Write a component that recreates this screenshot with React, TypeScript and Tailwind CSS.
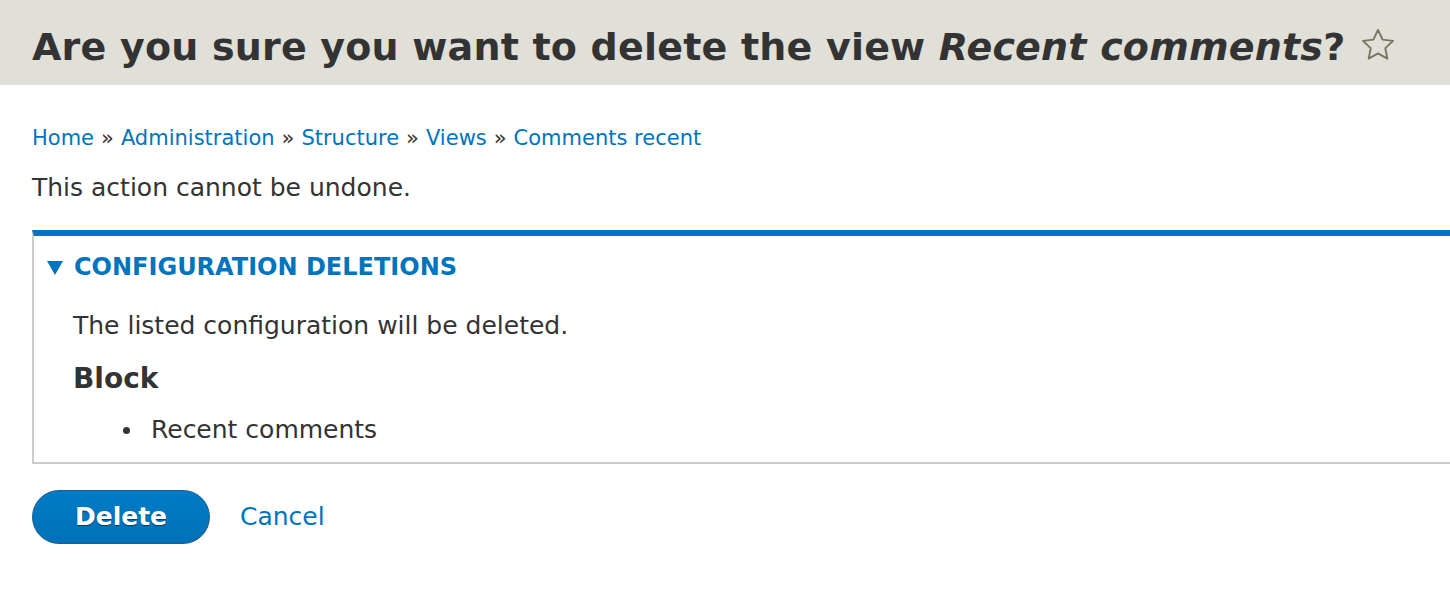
import React from 'react';

const font = { fontFamily: '"DejaVu Sans", "Lucida Grande", Verdana, sans-serif' };

const crumbs = ['Home', 'Administration', 'Structure', 'Views', 'Comments recent'];

export default function App() {
  return (
    <div className="w-[1450px] h-[614px] overflow-hidden bg-white text-[#333]" style={font}>
      <div className="h-[85px] bg-[#e0e0d8] flex items-center pl-[32px] pt-[8px]">
        <h1 className="text-[38px] font-bold tracking-[0.2px] leading-none text-[#333] flex items-center">
          <span>
            Are you sure you want to delete the view <em>Recent comments</em>?
          </span>
          <svg className="ml-[14px] w-[38px] h-[38px] -mt-[4px]" viewBox="0 0 24 24" fill="none" stroke="#7a7461" strokeWidth="1.2" strokeLinejoin="round">
            <path d="M12 2.5l2.9 6.1 6.6.8-4.9 4.6 1.3 6.6L12 17.3l-5.9 3.3 1.3-6.6-4.9-4.6 6.6-.8z" />
          </svg>
        </h1>
      </div>

      <div className="px-[32px]">
        <nav className="mt-[40px] text-[21px] leading-[26px] flex items-center">
          {crumbs.map((c, i) => (
            <span key={c} className="flex items-center">
              <a className="text-[#0074bd]">{c}</a>
              {i < crumbs.length - 1 && <span className="px-[7px] text-[#333]">»</span>}
            </span>
          ))}
        </nav>

        <p className="mt-[22px] text-[25px] leading-[30px]">This action cannot be undone.</p>

        <fieldset className="mt-[27px] w-[1440px] border-t-[6px] border-t-[#0074bd] border-l-2 border-l-[#ccc] border-b-2 border-b-[#ccc] pb-[17px]">
          <div className="flex items-center pl-[13px] pt-[17px] text-[#0074bd] font-bold text-[24px] leading-[28px] uppercase">
            <svg className="w-[16px] h-[14px] mr-[11px] mt-[2px]" viewBox="0 0 16 14">
              <path d="M0 0h16L8 14z" fill="#0074bd" />
            </svg>
            Configuration deletions
          </div>
          <div className="pl-[39px]">
            <p className="mt-[30px] text-[25px] leading-[30px]">The listed configuration will be deleted.</p>
            <h3 className="mt-[21px] text-[28px] font-bold leading-[34px]">Block</h3>
            <div className="mt-[19px] pl-[50px] flex items-center text-[25px] leading-[30px]">
              <span className="w-[7px] h-[7px] rounded-full bg-[#333] mr-[21px]" />
              Recent comments
            </div>
          </div>
        </fieldset>

        <div className="mt-[26px] flex items-center">
          <button className="h-[54px] w-[178px] rounded-full border border-[#1e5c90] bg-gradient-to-b from-[#007bc6] to-[#0071b8] text-white font-bold text-[25px] [text-shadow:0_1px_1px_rgba(0,0,0,0.5)]">
            Delete
          </button>
          <a className="ml-[30px] text-[25px] text-[#0074bd]">Cancel</a>
        </div>
      </div>
    </div>
  );
}
